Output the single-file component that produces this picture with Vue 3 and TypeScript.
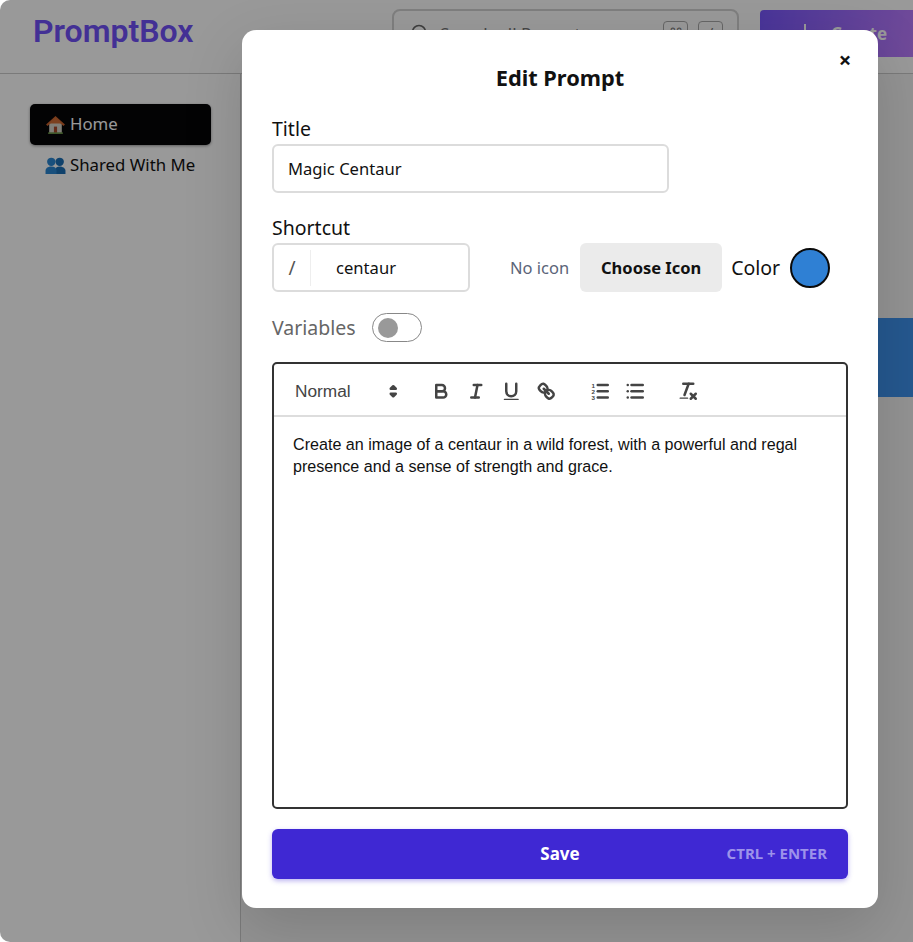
<script setup lang="ts">
import { ref } from 'vue'

const title = ref('Magic Centaur')
const shortcut = ref('centaur')
const variables = ref(false)
const color = ref('#2f80d4')
const nav = [
  { label: 'Home', icon: 'house', active: true },
  { label: 'Shared With Me', icon: 'people', active: false },
]
</script>

<template>
  <div class="page">
    <header class="topbar">
      <div class="logo">PromptBox</div>
      <div class="search">
        <svg class="search-icon" viewBox="0 0 20 20" width="20" height="20"><circle cx="9" cy="9" r="6.5" /><line x1="14" y1="14" x2="18" y2="18" /></svg>
        <span class="search-text">Search all Prompts</span>
        <kbd>⌘</kbd>
        <kbd>/</kbd>
      </div>
      <button class="create">
        <svg class="plus" viewBox="0 0 24 24" width="24" height="24"><path d="M12 2v20M2 12h20" /></svg>
        <span>Create</span>
      </button>
    </header>
    <div class="body">
      <aside class="sidebar">
        <a v-for="item in nav" :key="item.label" class="nav-item" :class="{ active: item.active }">
          <svg v-if="item.icon === 'house'" class="emoji" viewBox="0 0 20 20" width="21" height="21">
            <rect x="4" y="8" width="12" height="10" fill="#d8d4c8" />
            <path d="M1 10 10 2l9 8-1.4 1.4L10 4.8 2.4 11.4Z" fill="#c9622d" />
            <path d="M3.5 9 10 3.4 16.5 9" fill="#cf6d35" />
            <rect x="8.5" y="12" width="3" height="6" fill="#a8482a" />
            <rect x="3" y="17.5" width="14" height="1.5" fill="#6f9a4b" />
          </svg>
          <svg v-else class="emoji" viewBox="0 0 20 20" width="21" height="21">
            <circle cx="14" cy="6.5" r="4" fill="#1c6fb5" />
            <path d="M9.5 18v-3c0-2.5 2-4 4.5-4s5.500 1.500 5.500 4v3Z" fill="#1c6fb5" />
            <circle cx="6" cy="6.5" r="4" fill="#2a86d1" />
            <path d="M0.5 18v-3c0-2.500 2.500-4 5.500-4s5 1.500 5 4v3Z" fill="#2a86d1" />
          </svg>
          <span class="nav-label">{{ item.label }}</span>
        </a>
      </aside>
      <main class="content">
        <div class="card"></div>
      </main>
    </div>

    <div class="overlay">
      <section class="modal">
        <button class="close">×</button>
        <h2>Edit Prompt</h2>

        <label class="label label-title">Title</label>
        <input v-model="title" class="field title-field" />

        <label class="label label-shortcut">Shortcut</label>
        <div class="shortcut-row">
          <div class="field shortcut">
            <span class="slash">/</span>
            <input v-model="shortcut" class="shortcut-input" />
          </div>
          <div class="icon-group">
            <span class="no-icon">No icon</span>
            <button class="choose">Choose Icon</button>
            <span class="color-label">Color</span>
            <span class="swatch" :style="{ background: color }"></span>
          </div>
        </div>

        <div class="variables">
          <span>Variables</span>
          <button class="toggle" :class="{ on: variables }" @click="variables = !variables"><i></i></button>
        </div>

        <div class="editor">
          <div class="toolbar">
            <div class="picker">
              <span>Normal</span>
              <svg viewBox="0 0 18 18" width="22.5" height="22.5"><polygon class="fill" points="7 11 9 13 11 11" /><polygon class="fill" points="7 7 9 5 11 7" /><path class="line" d="M7 11 9 13 11 11ZM7 7 9 5 11 7Z" /></svg>
            </div>
            <div class="group">
              <button><svg viewBox="0 0 18 18"><path class="line" d="M5,4H9.5A2.5,2.5,0,0,1,12,6.5v0A2.5,2.5,0,0,1,9.5,9H5A0,0,0,0,1,5,9V4A0,0,0,0,1,5,4Z" /><path class="line" d="M5,9h5.5A2.5,2.5,0,0,1,13,11.5v0A2.5,2.5,0,0,1,10.5,14H5a0,0,0,0,1,0,0V9A0,0,0,0,1,5,9Z" /></svg></button>
              <button><svg viewBox="0 0 18 18"><line class="line" x1="7" x2="13" y1="4" y2="4" /><line class="line" x1="5" x2="11" y1="14" y2="14" /><line class="line" x1="8" x2="10" y1="14" y2="4" /></svg></button>
              <button><svg viewBox="0 0 18 18"><path class="line" d="M5,3V9a4.012,4.012,0,0,0,4,4H9a4.012,4.012,0,0,0,4-4V3" /><rect class="fill" height="1" rx="0.5" ry="0.5" width="12" x="3" y="15" /></svg></button>
              <button><svg viewBox="0 0 18 18"><line class="line" x1="7" x2="11" y1="7" y2="11" /><path class="line" d="M8.9,4.577a3.476,3.476,0,0,1,.36,4.679A3.476,3.476,0,0,1,4.577,8.9C3.185,7.5,2.035,6.4,4.217,4.217S7.5,3.185,8.9,4.577Z" /><path class="line" d="M13.423,9.1a3.476,3.476,0,0,0-4.679-.36,3.476,3.476,0,0,0,.36,4.679c1.392,1.392,2.5,2.542,4.679.36S14.815,10.5,13.423,9.1Z" /></svg></button>
            </div>
            <div class="group tight">
              <button><svg viewBox="0 0 18 18"><line class="line" x1="7" x2="15" y1="4" y2="4" /><line class="line" x1="7" x2="15" y1="9" y2="9" /><line class="line" x1="7" x2="15" y1="14" y2="14" /><text x="2" y="6" class="num">1</text><text x="2" y="11" class="num">2</text><text x="2" y="16" class="num">3</text></svg></button>
              <button><svg viewBox="0 0 18 18"><line class="line" x1="6" x2="15" y1="4" y2="4" /><line class="line" x1="6" x2="15" y1="9" y2="9" /><line class="line" x1="6" x2="15" y1="14" y2="14" /><line class="line" x1="3" x2="3" y1="4" y2="4" /><line class="line" x1="3" x2="3" y1="9" y2="9" /><line class="line" x1="3" x2="3" y1="14" y2="14" /></svg></button>
            </div>
            <div class="group tight">
              <button><svg viewBox="0 0 18 18"><line class="line" x1="5" x2="13" y1="3" y2="3" /><line class="line" x1="6" x2="9.35" y1="12" y2="3" /><line class="line" x1="11" x2="15" y1="11" y2="15" /><line class="line" x1="15" x2="11" y1="11" y2="15" /><rect class="fill" height="1" rx="0.5" ry="0.5" width="7" x="2" y="14" /></svg></button>
            </div>
          </div>
          <div class="text">
            Create an image of a centaur in a wild forest, with a powerful and regal presence and a sense of strength and grace.
          </div>
        </div>

        <button class="save">
          <span>Save</span>
          <small>CTRL + ENTER</small>
        </button>
      </section>
    </div>
  </div>
</template>

<style>
html, body { margin: 0; height: 100%; overflow: hidden; background: #fff; }
</style>

<style scoped>
.page {
  position: relative;
  width: 913px;
  height: 942px;
  overflow: hidden;
  border-radius: 10px 0 0 10px;
  font-family: "Noto Sans", "Open Sans", sans-serif;
  color: #111;
  background: #fff;
}
button { font-family: inherit; border: none; cursor: pointer; }
input { font-family: inherit; color: inherit; outline: none; }

.topbar {
  height: 73px;
  display: flex;
  align-items: flex-start;
  border-bottom: 1px solid #ccc;
}
.logo {
  margin: 10px 0 0 33px;
  width: 359px;
  flex: none;
  font-family: Roboto, sans-serif;
  font-weight: 600;
  font-size: 32px;
  line-height: 42px;
  color: #7050f8;
}
.search {
  margin-top: 9px;
  width: 347px;
  flex: none;
  height: 48px;
  box-sizing: border-box;
  border: 2px solid #d4d4d4;
  border-radius: 8px;
  display: flex;
  align-items: center;
  padding: 0 14px 0 16px;
  font-size: 17px;
  color: #777;
}
.search-icon { fill: none; stroke: #666; stroke-width: 1.6; flex: none; margin-right: 10px; }
.search-text { flex: 1; }
kbd {
  width: 25px;
  height: 24px;
  margin-left: 10px;
  margin-top: -1px;
  box-sizing: border-box;
  border: 1px solid #aaa;
  border-radius: 4px;
  text-align: center;
  font-family: inherit;
  font-size: 14px;
  line-height: 22px;
}
.create {
  margin: 10px 0 0 21px;
  flex: none;
  width: 200px;
  height: 47px;
  border-radius: 4px;
  background: linear-gradient(100deg, #7a58ff, #d088ff);
  color: #fff;
  font-weight: 700;
  font-size: 17px;
  padding: 0 0 0 33px;
  display: flex;
  align-items: center;
  gap: 14px;
}
.plus { fill: none; stroke: #fff; stroke-width: 2; }

.body { display: flex; height: 868px; }
.sidebar {
  width: 240px;
  flex: none;
  border-right: 1px solid #ccc;
  padding-top: 30px;
  box-sizing: content-box;
  display: flex;
  flex-direction: column;
  align-items: flex-start;
}
.nav-item {
  margin-left: 30px;
  width: 181px;
  height: 41px;
  box-sizing: border-box;
  display: flex;
  align-items: center;
  gap: 4px;
  padding-left: 15px;
  border-radius: 5px;
  font-size: 16.8px;
  color: #111;
}
.nav-label { margin-top: -2px; }
.nav-item.active {
  background: #050508;
  color: #fff;
  box-shadow: 0 1px 3px rgba(0, 0, 0, 0.4);
}
.emoji { flex: none; }
.content { flex: 1; padding: 244px 0 0 20px; background: #f5f5f5; }
.card { height: 79px; background: #3e93ef; }

.overlay {
  position: absolute;
  inset: 0;
  background: rgba(0, 0, 0, 0.4);
}
.modal {
  position: absolute;
  left: 242px;
  top: 30px;
  width: 636px;
  height: 878px;
  box-sizing: border-box;
  padding: 0 30px;
  background: #fff;
  border-radius: 14px;
  box-shadow: 0 20px 60px rgba(0, 0, 0, 0.15);
  display: flex;
  flex-direction: column;
  align-items: flex-start;
}
.close {
  position: absolute;
  top: 20px;
  right: 22px;
  width: 22px;
  height: 18px;
  padding: 0;
  background: none;
  font-size: 22px;
  font-weight: 700;
  line-height: 18px;
  color: #111;
}
h2 {
  margin: 32px 0 0;
  width: 100%;
  text-align: center;
  font-size: 21.8px;
  font-weight: 700;
  line-height: 32px;
}
.label { font-size: 19.5px; line-height: 26px; }
.label-title { margin-top: 22px; }
.label-shortcut { margin-top: 22px; }
.field {
  height: 49px;
  box-sizing: border-box;
  border: 2px solid #dcdcdc;
  border-radius: 6px;
  background: #fff;
  font-size: 17px;
}
.title-field { width: 397px; margin-top: 2px; padding: 0 14px; font-size: 16.6px; }
.shortcut-row { margin-top: 2px; display: flex; align-items: center; }
.shortcut { width: 198px; display: flex; align-items: center; }
.slash { width: 36px; height: 36px; line-height: 36px; text-align: center; border-right: 1px solid #eee; color: #555; font-size: 19px; }
.shortcut-input { border: none; width: 130px; font-size: 16.6px; padding: 0 0 0 25px; }
.icon-group { display: flex; align-items: center; margin-left: 40px; }
.no-icon { color: #5b6478; font-size: 16.5px; }
.choose {
  margin-left: 11px;
  width: 142px;
  height: 49px;
  background: #ebebeb;
  border-radius: 6px;
  font-size: 16.5px;
  font-weight: 700;
  color: #111;
}
.color-label { margin-left: 9px; font-size: 19.5px; }
.swatch {
  margin-left: 10px;
  width: 40px;
  height: 40px;
  box-sizing: border-box;
  border: 2.5px solid #0a0a0a;
  border-radius: 50%;
}
.variables {
  margin-top: 21px;
  display: flex;
  align-items: center;
  gap: 16px;
  font-size: 19.5px;
  color: #666;
}
.toggle {
  width: 50px;
  height: 29px;
  box-sizing: border-box;
  padding: 0 5px;
  border: 1px solid #888;
  border-radius: 15px;
  background: #fff;
  display: flex;
  align-items: center;
}
.toggle i { width: 20px; height: 20px; border-radius: 50%; background: #999; }
.editor {
  margin-top: 20px;
  width: 576px;
  height: 447px;
  box-sizing: border-box;
  border: 2px solid #333;
  border-radius: 5px;
  font-family: "Liberation Sans", Arial, sans-serif;
}
.toolbar {
  height: 53px;
  box-sizing: border-box;
  border-bottom: 2px solid #ddd;
  padding: 12px 9px 0;
  display: flex;
  align-items: flex-start;
}
.picker {
  width: 122px;
  height: 30px;
  flex: none;
  box-sizing: border-box;
  padding: 0 1px 0 12px;
  display: flex;
  align-items: center;
  justify-content: space-between;
  font-size: 17.3px;
  color: #444;
}
.group { display: flex; margin-left: 19px; }
.group.tight { margin-left: 18.5px; }
.group button { width: 35px; height: 30px; padding: 4px 6px; background: none; }
.group svg { display: block; width: 22.5px; height: 22.5px; }
.line { fill: none; stroke: #444; stroke-width: 2; stroke-linecap: round; stroke-linejoin: round; }
.fill { fill: #444; }
.num { font-size: 5px; font-weight: 700; fill: #444; font-family: "Liberation Sans", sans-serif; }
.text {
  padding: 16px 19px;
  font-size: 16.13px;
  line-height: 22.4px;
  color: #111;
}
.save {
  position: relative;
  margin-top: 20px;
  width: 576px;
  height: 50px;
  padding: 0 0 2px;
  border-radius: 6px;
  background: #3f28d3;
  box-shadow: 0 2px 5px rgba(63, 40, 211, 0.35);
  color: #fff;
  font-size: 17px;
  font-weight: 700;
}
.save small {
  position: absolute;
  right: 21px;
  top: 14px;
  font-size: 15px;
  font-weight: 700;
  line-height: 20px;
  color: #9d92ea;
}
</style>
